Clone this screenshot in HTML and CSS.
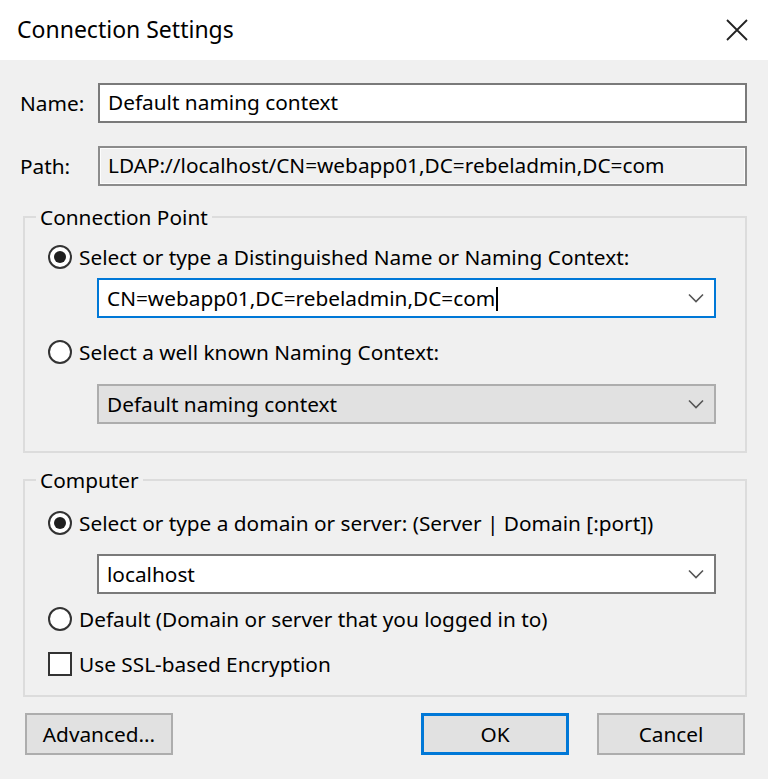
FILE: index.html
```html
<!doctype html>
<html lang="en-us">
  <head>
    <meta charset="utf-8">
    <title>Connection Settings</title>
    <link rel="stylesheet" href="styles.css">
  </head>
  <body>
    <div class="dialog">
      <div class="titlebar">
        <span class="title">Connection Settings</span>
        <span class="close">
          <svg width="22" height="22" viewBox="0 0 22 22"><path d="M1 1 L21 21 M21 1 L1 21" stroke="#222" stroke-width="1.8" fill="none"/></svg>
        </span>
      </div>

      <div class="body">
        <div class="field">
          <span class="label">Name:</span>
          <div class="textbox">Default naming context</div>
        </div>
        <div class="field">
          <span class="label">Path:</span>
          <div class="textbox readonly">LDAP://localhost/CN=webapp01,DC=rebeladmin,DC=com</div>
        </div>

        <fieldset class="group group-point">
          <legend>Connection Point</legend>
          <div class="option first">
            <span class="radio checked"></span>
            <span>Select or type a Distinguished Name or Naming Context:</span>
          </div>
          <div class="combo focused">
            <span class="value">CN=webapp01,DC=rebeladmin,DC=com<span class="caret"></span></span>
            <svg class="chevron" width="16" height="10" viewBox="0 0 16 10"><path d="M1 1.5 L8 8.5 L15 1.5" stroke="#555" stroke-width="1.6" fill="none"/></svg>
          </div>
          <div class="option second">
            <span class="radio"></span>
            <span>Select a well known Naming Context:</span>
          </div>
          <div class="combo list">
            <span class="value">Default naming context</span>
            <svg class="chevron" width="16" height="10" viewBox="0 0 16 10"><path d="M1 1.5 L8 8.5 L15 1.5" stroke="#555" stroke-width="1.6" fill="none"/></svg>
          </div>
        </fieldset>

        <fieldset class="group group-computer">
          <legend>Computer</legend>
          <div class="option first">
            <span class="radio checked"></span>
            <span>Select or type a domain or server: (Server | Domain [:port])</span>
          </div>
          <div class="combo">
            <span class="value">localhost</span>
            <svg class="chevron" width="16" height="10" viewBox="0 0 16 10"><path d="M1 1.5 L8 8.5 L15 1.5" stroke="#555" stroke-width="1.6" fill="none"/></svg>
          </div>
          <div class="option default">
            <span class="radio"></span>
            <span>Default (Domain or server that you logged in to)</span>
          </div>
          <div class="option ssl">
            <span class="checkbox"></span>
            <span>Use SSL-based Encryption</span>
          </div>
        </fieldset>

        <div class="buttons">
          <button class="btn">Advanced...</button>
          <span class="spacer"></span>
          <button class="btn default">OK</button>
          <button class="btn">Cancel</button>
        </div>
      </div>
    </div>
  </body>
</html>
```

FILE: styles.css
```css
html, body {
  height: 100%;
}

body {
  margin: 0;
  background-color: #f0f0f0;
  font-family: "Noto Sans", "Open Sans", sans-serif;
  font-size: 20.8px;
  color: #000;
}

.dialog {
  width: 768px;
  height: 779px;
  display: flex;
  flex-direction: column;
}

.titlebar {
  height: 60px;
  background: #fff;
  display: flex;
  align-items: center;
  padding: 0 20px 0 17px;
  flex-shrink: 0;
}

.title {
  flex: 1;
  font-size: 23px;
  padding-bottom: 2px;
}

.close {
  display: flex;
}

.body {
  padding: 23px 21px 0 20px;
}

.field {
  display: flex;
  align-items: center;
}

.field + .field {
  margin-top: 23px;
}

.field .label {
  width: 78px;
  flex-shrink: 0;
}

.textbox {
  flex: 1;
  height: 36px;
  line-height: 34px;
  border: 2px solid #7a7a7a;
  background: #fff;
  padding: 0 8px;
  white-space: nowrap;
}

.textbox.readonly {
  background: #f0f0f0;
  border-color: #8c8c8c;
  box-shadow: inset 0 0 0 1px #fdfdfd;
}

.group {
  margin: 18px 0 0 3px;
  border: 2px solid #dcdcdc;
  padding: 0 29px 27px 23px;
}

.group legend {
  padding: 0 4px;
  margin-left: -12px;
  line-height: 26px;
}

.group-computer {
  margin-top: 14px;
  padding-bottom: 15px;
}

.option {
  display: flex;
  align-items: center;
  gap: 7px;
  height: 32px;
  white-space: nowrap;
}

.group-point .first { margin-top: 11px; }
.group-point .second { margin-top: 18px; }
.group-computer .first { margin-top: 14px; }
.group-computer .default { margin-top: 9px; }
.group-computer .ssl { margin-top: 13px; }

.radio {
  width: 24px;
  height: 24px;
  box-sizing: border-box;
  border: 2px solid #333;
  border-radius: 50%;
  background: #fff;
  display: flex;
  align-items: center;
  justify-content: center;
  flex-shrink: 0;
}

.radio.checked::after {
  content: "";
  width: 12px;
  height: 12px;
  border-radius: 50%;
  background: #1f1f1f;
}

.checkbox {
  width: 24px;
  height: 24px;
  box-sizing: border-box;
  border: 2px solid #333;
  background: #fff;
  flex-shrink: 0;
}

.combo {
  margin: 5px 0 0 49px;
  height: 40px;
  box-sizing: border-box;
  border: 2px solid #7a7a7a;
  background: #fff;
  display: flex;
  align-items: center;
  padding: 0 10px 0 8px;
}

.combo.focused {
  border-color: #0078d7;
}

.combo.list {
  background: #e1e1e1;
  border-color: #adadad;
  margin-top: 16px;
}

.group-computer .combo {
  margin-top: 15px;
}

.combo .value {
  flex: 1;
  white-space: nowrap;
}

.caret {
  display: inline-block;
  width: 2px;
  height: 24px;
  background: #000;
  vertical-align: -5px;
  margin-left: 1px;
}

.chevron {
  flex-shrink: 0;
}

.buttons {
  display: flex;
  margin: 16px 2px 0 5px;
  gap: 28px;
}

.spacer {
  flex: 1;
}

.btn {
  width: 148px;
  height: 42px;
  font-family: inherit;
  font-size: 20.8px;
  color: #000;
  background: #e1e1e1;
  border: 2px solid #adadad;
  padding: 0;
}

.btn.default {
  border-color: #0078d7;
  box-shadow: inset 0 0 0 1px #0078d7;
}
```
